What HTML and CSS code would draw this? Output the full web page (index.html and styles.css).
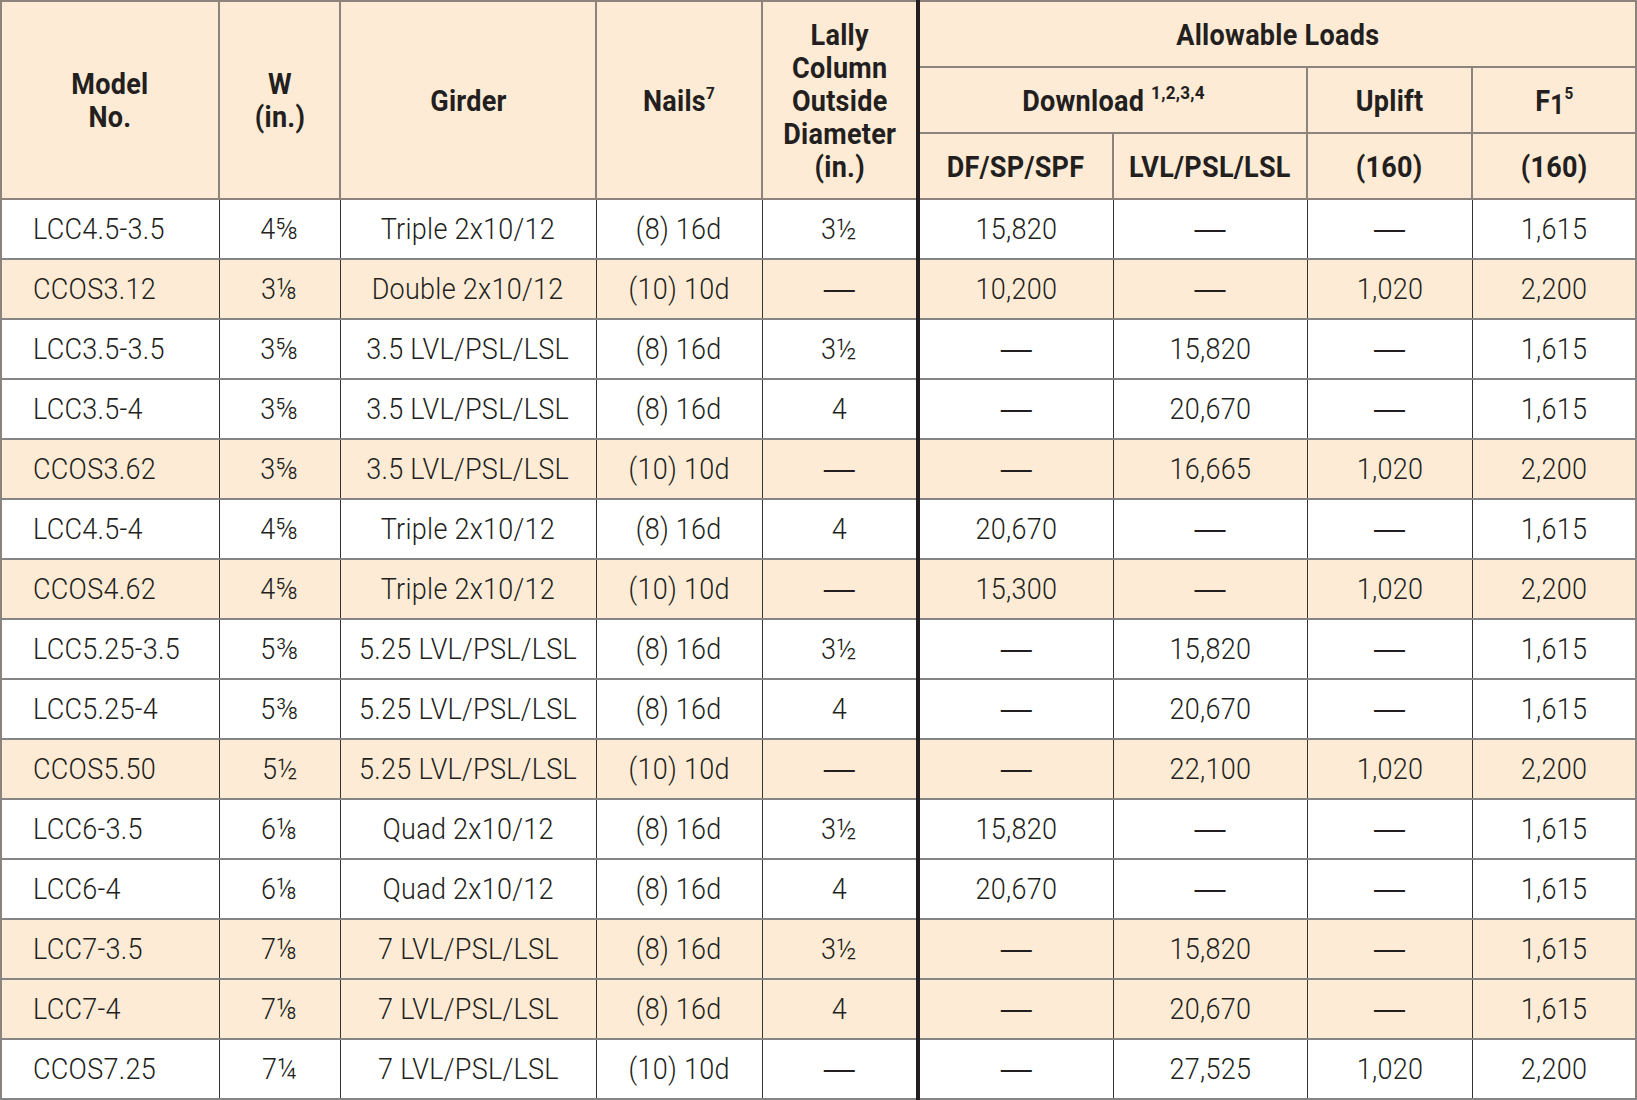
FILE: index.html
```html
<!DOCTYPE html>
<html lang="en">
<head>
<meta charset="utf-8">
<title>Lally Column Caps — Allowable Loads</title>
<link rel="stylesheet" href="styles.css">
</head>
<body>
<table class="spec">
  <colgroup>
    <col class="c-model">
    <col class="c-w">
    <col class="c-girder">
    <col class="c-nails">
    <col class="c-lally">
    <col class="c-df">
    <col class="c-lvl">
    <col class="c-uplift">
    <col class="c-f1">
  </colgroup>
  <thead>
    <tr class="hrow">
      <th rowspan="3"><span class="t">Model<br>No.</span></th>
      <th rowspan="3"><span class="t">W<br>(in.)</span></th>
      <th rowspan="3"><span class="t">Girder</span></th>
      <th rowspan="3"><span class="t">Nails<sup class="sup">7</sup></span></th>
      <th rowspan="3" class="lally"><span class="t">Lally<br>Column<br>Outside<br>Diameter<br>(in.)</span></th>
      <th colspan="4" class="thick"><span class="t">Allowable Loads</span></th>
    </tr>
    <tr class="hrow">
      <th colspan="2" class="thick"><span class="t">Download <sup class="sup sup-dl">1,2,3,4</sup></span></th>
      <th><span class="t">Uplift</span></th>
      <th><span class="t">F<sub class="sub">1</sub><sup class="sup">5</sup></span></th>
    </tr>
    <tr class="hrow">
      <th class="thick"><span class="t">DF/SP/SPF</span></th>
      <th><span class="t">LVL/PSL/LSL</span></th>
      <th><span class="t">(160)</span></th>
      <th><span class="t">(160)</span></th>
    </tr>
  </thead>
  <tbody>
    <tr><td class="model"><span class="t">LCC4.5-3.5</span></td><td><span class="t">4⅝</span></td><td><span class="t">Triple 2x10/12</span></td><td><span class="t">(8) 16d</span></td><td><span class="t">3½</span></td><td class="thick"><span class="t">15,820</span></td><td><span class="dash">—</span></td><td><span class="dash">—</span></td><td><span class="t">1,615</span></td></tr>
    <tr class="alt"><td class="model"><span class="t">CCOS3.12</span></td><td><span class="t">3⅛</span></td><td><span class="t">Double 2x10/12</span></td><td><span class="t">(10) 10d</span></td><td><span class="dash">—</span></td><td class="thick"><span class="t">10,200</span></td><td><span class="dash">—</span></td><td><span class="t">1,020</span></td><td><span class="t">2,200</span></td></tr>
    <tr><td class="model"><span class="t">LCC3.5-3.5</span></td><td><span class="t">3⅝</span></td><td><span class="t">3.5 LVL/PSL/LSL</span></td><td><span class="t">(8) 16d</span></td><td><span class="t">3½</span></td><td class="thick"><span class="dash">—</span></td><td><span class="t">15,820</span></td><td><span class="dash">—</span></td><td><span class="t">1,615</span></td></tr>
    <tr><td class="model"><span class="t">LCC3.5-4</span></td><td><span class="t">3⅝</span></td><td><span class="t">3.5 LVL/PSL/LSL</span></td><td><span class="t">(8) 16d</span></td><td><span class="t">4</span></td><td class="thick"><span class="dash">—</span></td><td><span class="t">20,670</span></td><td><span class="dash">—</span></td><td><span class="t">1,615</span></td></tr>
    <tr class="alt"><td class="model"><span class="t">CCOS3.62</span></td><td><span class="t">3⅝</span></td><td><span class="t">3.5 LVL/PSL/LSL</span></td><td><span class="t">(10) 10d</span></td><td><span class="dash">—</span></td><td class="thick"><span class="dash">—</span></td><td><span class="t">16,665</span></td><td><span class="t">1,020</span></td><td><span class="t">2,200</span></td></tr>
    <tr><td class="model"><span class="t">LCC4.5-4</span></td><td><span class="t">4⅝</span></td><td><span class="t">Triple 2x10/12</span></td><td><span class="t">(8) 16d</span></td><td><span class="t">4</span></td><td class="thick"><span class="t">20,670</span></td><td><span class="dash">—</span></td><td><span class="dash">—</span></td><td><span class="t">1,615</span></td></tr>
    <tr class="alt"><td class="model"><span class="t">CCOS4.62</span></td><td><span class="t">4⅝</span></td><td><span class="t">Triple 2x10/12</span></td><td><span class="t">(10) 10d</span></td><td><span class="dash">—</span></td><td class="thick"><span class="t">15,300</span></td><td><span class="dash">—</span></td><td><span class="t">1,020</span></td><td><span class="t">2,200</span></td></tr>
    <tr><td class="model"><span class="t">LCC5.25-3.5</span></td><td><span class="t">5⅜</span></td><td><span class="t">5.25 LVL/PSL/LSL</span></td><td><span class="t">(8) 16d</span></td><td><span class="t">3½</span></td><td class="thick"><span class="dash">—</span></td><td><span class="t">15,820</span></td><td><span class="dash">—</span></td><td><span class="t">1,615</span></td></tr>
    <tr><td class="model"><span class="t">LCC5.25-4</span></td><td><span class="t">5⅜</span></td><td><span class="t">5.25 LVL/PSL/LSL</span></td><td><span class="t">(8) 16d</span></td><td><span class="t">4</span></td><td class="thick"><span class="dash">—</span></td><td><span class="t">20,670</span></td><td><span class="dash">—</span></td><td><span class="t">1,615</span></td></tr>
    <tr class="alt"><td class="model"><span class="t">CCOS5.50</span></td><td><span class="t">5½</span></td><td><span class="t">5.25 LVL/PSL/LSL</span></td><td><span class="t">(10) 10d</span></td><td><span class="dash">—</span></td><td class="thick"><span class="dash">—</span></td><td><span class="t">22,100</span></td><td><span class="t">1,020</span></td><td><span class="t">2,200</span></td></tr>
    <tr><td class="model"><span class="t">LCC6-3.5</span></td><td><span class="t">6⅛</span></td><td><span class="t">Quad 2x10/12</span></td><td><span class="t">(8) 16d</span></td><td><span class="t">3½</span></td><td class="thick"><span class="t">15,820</span></td><td><span class="dash">—</span></td><td><span class="dash">—</span></td><td><span class="t">1,615</span></td></tr>
    <tr><td class="model"><span class="t">LCC6-4</span></td><td><span class="t">6⅛</span></td><td><span class="t">Quad 2x10/12</span></td><td><span class="t">(8) 16d</span></td><td><span class="t">4</span></td><td class="thick"><span class="t">20,670</span></td><td><span class="dash">—</span></td><td><span class="dash">—</span></td><td><span class="t">1,615</span></td></tr>
    <tr class="alt"><td class="model"><span class="t">LCC7-3.5</span></td><td><span class="t">7⅛</span></td><td><span class="t">7 LVL/PSL/LSL</span></td><td><span class="t">(8) 16d</span></td><td><span class="t">3½</span></td><td class="thick"><span class="dash">—</span></td><td><span class="t">15,820</span></td><td><span class="dash">—</span></td><td><span class="t">1,615</span></td></tr>
    <tr class="alt"><td class="model"><span class="t">LCC7-4</span></td><td><span class="t">7⅛</span></td><td><span class="t">7 LVL/PSL/LSL</span></td><td><span class="t">(8) 16d</span></td><td><span class="t">4</span></td><td class="thick"><span class="dash">—</span></td><td><span class="t">20,670</span></td><td><span class="dash">—</span></td><td><span class="t">1,615</span></td></tr>
    <tr><td class="model"><span class="t">CCOS7.25</span></td><td><span class="t">7¼</span></td><td><span class="t">7 LVL/PSL/LSL</span></td><td><span class="t">(10) 10d</span></td><td><span class="dash">—</span></td><td class="thick"><span class="dash">—</span></td><td><span class="t">27,525</span></td><td><span class="t">1,020</span></td><td><span class="t">2,200</span></td></tr>
  </tbody>
</table>
</body>
</html>
```

FILE: styles.css
```css
html, body {
  margin: 0;
  padding: 0;
  background: #ffffff;
}

.spec {
  border-collapse: collapse;
  table-layout: fixed;
  width: 1635px;
  font-family: "Roboto", "Liberation Sans", sans-serif;
  color: #231f20;
}

.c-model { width: 218px; }
.c-w { width: 121px; }
.c-girder { width: 256px; }
.c-nails { width: 166px; }
.c-lally { width: 156px; }
.c-df { width: 195px; }
.c-lvl { width: 194px; }
.c-uplift { width: 165px; }
.c-f1 { width: 164px; }

.spec th,
.spec td {
  padding: 0;
  text-align: center;
  vertical-align: middle;
  white-space: nowrap;
}

.spec th {
  background: #fdebd5;
  border: 2px solid #8c847c;
  font-weight: 700;
  font-size: 30px;
  line-height: 33px;
  height: 64px;
}

.spec td {
  border-top: 2px solid #858585;
  border-bottom: 2px solid #858585;
  border-left: 1px solid #333333;
  border-right: 1px solid #333333;
  font-size: 30px;
  font-weight: 300;
  line-height: 34px;
  height: 58px;
}

.spec td:first-child,
.spec th:first-child {
  border-left: 2px solid #8c847c;
}

.spec td:last-child {
  border-right: 2px solid #8c847c;
}

.spec .alt td {
  background: #fdebd5;
}

.spec td.model {
  text-align: left;
  padding-left: 31px;
}

.spec .thick {
  border-left: 4px solid #231f20;
}

.spec .lally {
  border-right: 4px solid #231f20;
}

/* condensed look: narrow the glyphs horizontally */
.t {
  display: inline-block;
  transform: scaleX(0.9);
  transform-origin: center;
  letter-spacing: 0.3px;
}

.model .t {
  transform-origin: left center;
}

.dash {
  display: inline-block;
  font-family: "Liberation Sans", sans-serif;
  font-weight: 400;
  font-size: 31px;
}

.sup {
  font-size: 17px;
  vertical-align: 12px;
  line-height: 0;
}

.sup-dl {
  font-size: 19px;
}

.sub {
  font-size: 27px;
  vertical-align: -3px;
  line-height: 0;
}
```
